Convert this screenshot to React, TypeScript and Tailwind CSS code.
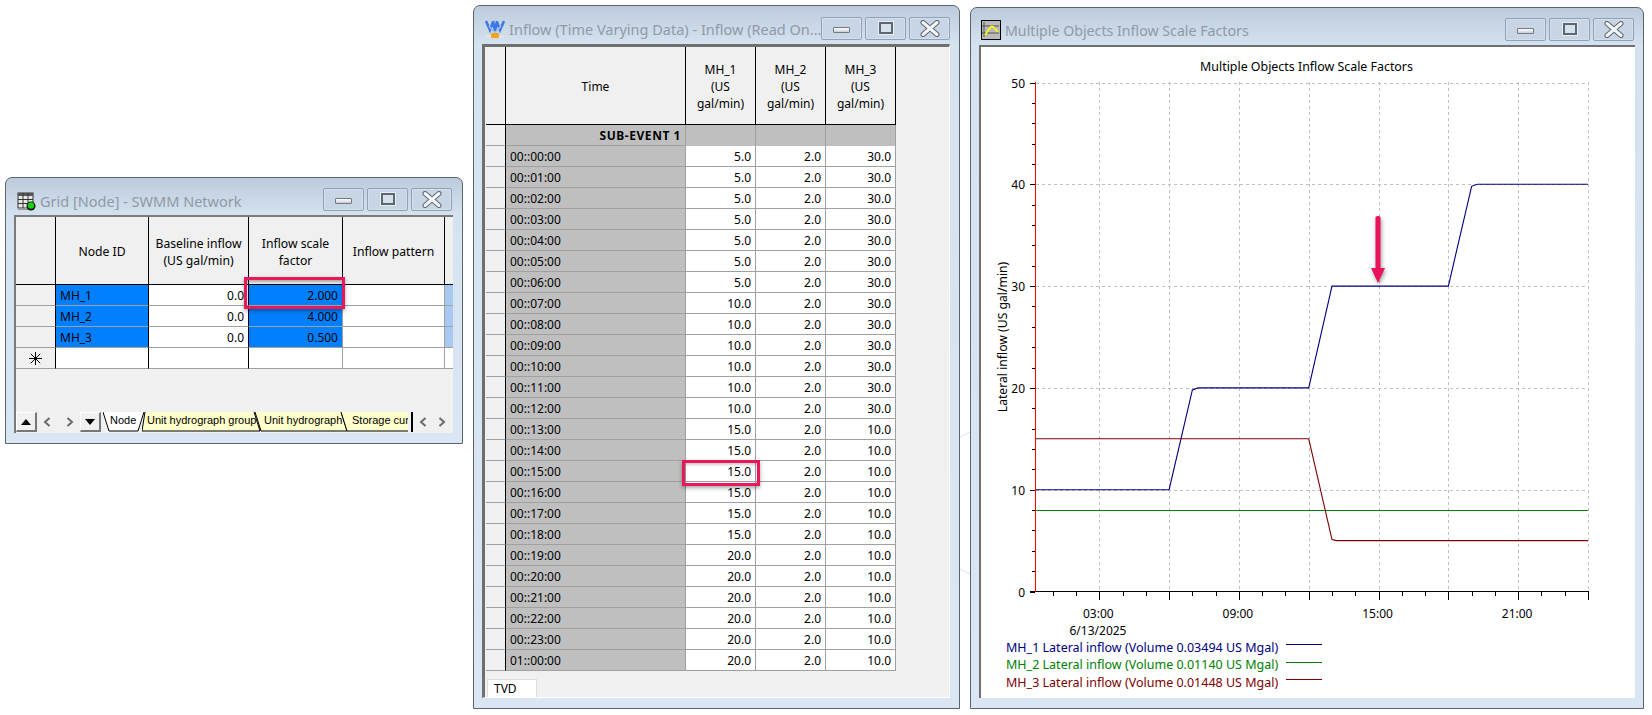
import React from "react";

const MinBtn = () => (
  <div className="w-[41px] h-[23px] rounded-[2px] border border-[#8fa2b9] bg-[#c7d5e4] shadow-[inset_0_0_0_1px_rgba(255,255,255,0.25)] flex items-center justify-center">
    <div className="w-[17px] h-[6px] mt-[3px] rounded-[1px] border border-[#6f7a87] bg-linear-to-b from-white to-[#c9ced4]" />
  </div>
);
const MaxBtn = () => (
  <div className="w-[41px] h-[23px] rounded-[2px] border border-[#8fa2b9] bg-[#c7d5e4] shadow-[inset_0_0_0_1px_rgba(255,255,255,0.25)] flex items-center justify-center">
    <div className="w-[14px] h-[12px] -mt-[1px] border-2 border-[#5c6775] bg-[#d7e1ec] shadow-[0_0_0_1px_rgba(255,255,255,0.6)]" />
  </div>
);
const CloseBtn = () => (
  <div className="w-[41px] h-[23px] rounded-[2px] border border-[#8fa2b9] bg-[#c7d5e4] shadow-[inset_0_0_0_1px_rgba(255,255,255,0.25)] flex items-center justify-center">
    <svg width="20" height="17" viewBox="0 0 20 17">
      <path d="M3 2.5 L17 14.5 M17 2.5 L3 14.5" stroke="#5e6873" strokeWidth="5" strokeLinecap="round" />
      <path d="M3 2.5 L17 14.5 M17 2.5 L3 14.5" stroke="#f4f6f8" strokeWidth="3" strokeLinecap="round" />
    </svg>
  </div>
);
const WinButtons = () => (
  <div className="ml-auto flex gap-[3px] shrink-0">
    <MinBtn />
    <MaxBtn />
    <CloseBtn />
  </div>
);

const GridIcon = () => (
  <svg width="19" height="19" viewBox="0 0 19 19" className="shrink-0">
    <rect x="1" y="1" width="15" height="15" fill="#e8e8e8" stroke="#333" />
    <rect x="1" y="1" width="15" height="3" fill="#555" />
    <path d="M1 7.5H16M1 11.5H16M6 1V16M11 1V16" stroke="#333" />
    <rect x="1" y="16" width="11" height="2" fill="#999" />
    <circle cx="14" cy="14" r="4.5" fill="#111" />
    <circle cx="14" cy="13.5" r="3.2" fill="#12d312" />
  </svg>
);
const InflowIcon = () => (
  <svg width="20" height="20" viewBox="0 0 20 20" className="shrink-0">
    <path d="M1 2 L5 11 L8 3 M8 2 L10 12 L12 2 M12 3 L15 11 L19 2" fill="none" stroke="#3f78e6" strokeWidth="2.6" />
    <path d="M4 7 L10 14 L16 7" fill="none" stroke="#9fc0f5" strokeWidth="1.6" />
    <rect x="1" y="16" width="18" height="3" fill="#dfe3e8" />
    <rect x="6" y="14" width="8" height="5" rx="1" fill="#f2a51e" />
  </svg>
);
const ChartIcon = () => (
  <svg width="20" height="20" viewBox="0 0 20 20" className="shrink-0">
    <rect x="0.5" y="0.5" width="19" height="19" fill="#b9b9b9" stroke="#000" />
    <path d="M3 2V17M1 6H18M1 13H18" stroke="#555" strokeWidth="1" />
    <path d="M4 15 L10 6.5 L12 6.5 L17 12" fill="none" stroke="#ffff00" strokeWidth="1.6" />
  </svg>
);

const frame =
  "absolute flex flex-col rounded-t-[7px] border border-[#5b646e] bg-[linear-gradient(#bccbdb_0,#d5e2f0_38px,#dae6f3_100%)]";

const Rowhead = ({ children }: { children?: React.ReactNode }) => (
  <div className="w-[40px] h-full shrink-0 bg-[#f0f0f0] border-r border-r-black border-b border-b-[#a0a0a0] flex items-center justify-center">
    {children}
  </div>
);

const HCell = ({ w, children }: { w: string; children: React.ReactNode }) => (
  <div className={`${w} h-full shrink-0 bg-[#f0f0f0] border-r border-black border-b pt-[2px] flex items-center justify-center text-center leading-[17px]`}>
    <div>{children}</div>
  </div>
);

type Row1 = { id: string; base: string; scale: string };
const nodeRows: Row1[] = [
  { id: "MH_1", base: "0.0", scale: "2.000" },
  { id: "MH_2", base: "0.0", scale: "4.000" },
  { id: "MH_3", base: "0.0", scale: "0.500" },
];

const Star = () => (
  <svg width="13" height="13" viewBox="0 0 13 13">
    <path d="M6.5 0V13M0 6.5H13M1.8 1.8L11.2 11.2M11.2 1.8L1.8 11.2" stroke="#000" strokeWidth="1" />
  </svg>
);

const Chevron = ({ dir }: { dir: "l" | "r" }) => (
  <svg width="8" height="10" viewBox="0 0 8 10">
    <path d={dir === "l" ? "M6.5 1 L2 5 L6.5 9" : "M1.5 1 L6 5 L1.5 9"} fill="none" stroke="#6b6b6b" strokeWidth="2" />
  </svg>
);
const RaisedBtn = ({ up }: { up: boolean }) => (
  <div className="w-[21px] h-[20px] shrink-0 bg-[#f0f0f0] border-t border-l border-t-white border-l-white border-b-2 border-r-2 border-b-[#777] border-r-[#777] flex items-center justify-center">
    <svg width="10" height="6" viewBox="0 0 10 6">
      <path d={up ? "M5 0 L10 6 H0 Z" : "M0 0 H10 L5 6 Z"} fill="#000" />
    </svg>
  </div>
);

const Tab = ({
  w,
  points,
  fill,
  className,
  textClass,
  children,
}: {
  w: number;
  points: string;
  fill: string;
  className: string;
  textClass: string;
  children: React.ReactNode;
}) => (
  <div className={`relative h-[20px] shrink-0 ${className}`}>
    <svg width={w} height="20" viewBox={`0 0 ${w} 20`} className="absolute inset-0">
      <polygon points={points} fill={fill} />
      <polyline points={points} fill="none" stroke="#000" strokeWidth="1" />
    </svg>
    <span className={`absolute top-[0px] leading-[17px] whitespace-nowrap text-[11px] font-['Liberation_Sans',sans-serif] ${textClass}`}>
      {children}
    </span>
  </div>
);

const GridWindow = () => (
  <div className={`${frame} left-[5px] top-[177px] w-[458px] h-[267px]`}>
    <div className="h-[37px] shrink-0 flex pl-[11px] pr-[10px] pt-[10px]">
      <div className="mt-[4px]">
        <GridIcon />
      </div>
      <div className="ml-[4px] mt-[2px] text-[14.5px] leading-[22px] text-[#8f9aa6] whitespace-nowrap">Grid [Node] - SWMM Network</div>
      <WinButtons />
    </div>
    <div className="ml-[8px] w-[439px] h-[218px] flex flex-col border-l-2 border-t-2 border-[#7a7a7a] bg-[#f0f0f0] text-[12px] text-black">
      <div className="h-[68px] flex shrink-0 text-[12.2px]">
        <div className="w-[40px] h-full shrink-0 bg-[#f0f0f0] border-r border-b border-black" />
        <HCell w="w-[93px]">Node ID</HCell>
        <HCell w="w-[100px]">
          Baseline inflow
          <br />
          (US gal/min)
        </HCell>
        <HCell w="w-[94px]">
          Inflow scale
          <br />
          factor
        </HCell>
        <HCell w="w-[102px]">Inflow pattern</HCell>
        <div className="flex-1 h-full bg-[#f0f0f0] border-b border-black" />
      </div>
      {nodeRows.map((r) => (
        <div key={r.id} className="h-[21px] flex shrink-0">
          <Rowhead />
          <div className="w-[93px] shrink-0 bg-[#0080ff] border-r border-r-black border-b border-b-[#a0a0a0] pl-[4px] pt-[2px] flex items-center">{r.id}</div>
          <div className="w-[100px] shrink-0 bg-white border-r border-r-black border-b border-b-[#a0a0a0] pr-[4px] pt-[2px] flex items-center justify-end">{r.base}</div>
          <div className="w-[94px] shrink-0 bg-[#0080ff] border-r border-r-[#a0a0a0] border-b border-b-[#a0a0a0] pr-[4px] pt-[2px] flex items-center justify-end">{r.scale}</div>
          <div className="w-[102px] shrink-0 bg-white border-r border-r-[#a0a0a0] border-b border-b-[#a0a0a0]" />
          <div className="flex-1 bg-[#a8c9f2] border-b border-b-[#a0a0a0]" />
        </div>
      ))}
      <div className="h-[21px] flex shrink-0">
        <Rowhead>
          <Star />
        </Rowhead>
        <div className="w-[93px] shrink-0 bg-white border-r border-r-black border-b border-b-[#a0a0a0]" />
        <div className="w-[100px] shrink-0 bg-white border-r border-r-black border-b border-b-[#a0a0a0]" />
        <div className="w-[94px] shrink-0 bg-white border-r border-r-[#a0a0a0] border-b border-b-[#a0a0a0]" />
        <div className="w-[102px] shrink-0 bg-white border-r border-r-[#a0a0a0] border-b border-b-[#a0a0a0]" />
        <div className="flex-1 bg-white border-b border-b-[#a0a0a0]" />
      </div>
      <div className="mt-auto mb-[1px] h-[20px] flex items-stretch shrink-0 border-t-0">
        <RaisedBtn up />
        <div className="w-[43px] shrink-0 flex items-center justify-between px-[6px]">
          <Chevron dir="l" />
          <Chevron dir="r" />
        </div>
        <RaisedBtn up={false} />
        <div className="w-[305px] shrink-0 ml-[2px] flex overflow-hidden">
          <Tab w={42} points="0,0 6,19 35,19 41,0" fill="#ffffff" className="w-[42px]" textClass="left-[7px]">
            Node
          </Tab>
          <Tab w={119} points="3,0 0,19 118,19 112,0" fill="#ffffcc" className="w-[119px] -ml-[3px]" textClass="left-[5px]">
            Unit hydrograph group
          </Tab>
          <Tab w={93} points="0,0 6,19 92,19 86,0" fill="#ffffcc" className="w-[93px] -ml-[6px]" textClass="left-[9px]">
            Unit hydrograph
          </Tab>
          <Tab w={90} points="0,0 6,19 90,19 90,0" fill="#ffffcc" className="w-[90px] -ml-[7px]" textClass="left-[11px]">
            Storage cur
          </Tab>
        </div>
        <div className="w-[2px] shrink-0 ml-[3px] bg-black" />
        <div className="flex-1 flex items-center justify-between pl-[6px] pr-[7px]">
          <Chevron dir="l" />
          <Chevron dir="r" />
        </div>
      </div>
    </div>
  </div>
);

const tvd = Array.from({ length: 25 }, (_, i) => {
  const label = i === 24 ? "01::00:00" : `00::${String(i).padStart(2, "0")}:00`;
  const a = i <= 6 ? "5.0" : i <= 12 ? "10.0" : i <= 18 ? "15.0" : "20.0";
  const c = i <= 12 ? "30.0" : "10.0";
  return { label, a, b: "2.0", c };
});

const NumCell = ({ v }: { v: string }) => (
  <div className="w-[70px] shrink-0 bg-white border-r border-b border-[#a0a0a0] pr-[4px] pt-[2px] flex items-center justify-end">{v}</div>
);

const InflowWindow = () => (
  <div className={`${frame} left-[473px] top-[5px] w-[487px] h-[704px]`}>
    <div className="h-[38px] shrink-0 flex pl-[11px] pr-[9px] pt-[11px]">
      <div className="mt-[2px]">
        <InflowIcon />
      </div>
      <div className="ml-[4px] mt-[1px] text-[14.5px] leading-[22px] text-[#8f9aa6] whitespace-nowrap">Inflow (Time Varying Data) - Inflow (Read On...</div>
      <WinButtons />
    </div>
    <div className="ml-[8px] w-[468px] h-[654px] flex flex-col border-l-[3px] border-t-[3px] border-[#6f6f6f] bg-[#f0f0f0] pl-[1px] text-[12px] text-black border-r border-r-white border-b border-b-white">
      <div className="h-[78px] flex shrink-0">
        <div className="w-[20px] h-full shrink-0 bg-[#f0f0f0] border-r border-b border-black" />
        <HCell w="w-[180px]">Time</HCell>
        {["MH_1", "MH_2", "MH_3"].map((n) => (
          <HCell key={n} w="w-[70px]">
            {n}
            <br />
            (US
            <br />
            gal/min)
          </HCell>
        ))}
      </div>
      <div className="h-[21px] flex shrink-0">
        <div className="w-[20px] shrink-0 bg-[#f0f0f0] border-r border-r-black border-b border-b-[#a0a0a0]" />
        <div className="w-[180px] shrink-0 bg-[#bfbfbf] border-r border-b border-[#a0a0a0] pr-[4px] pt-[2px] flex items-center justify-end font-bold tracking-[0.55px]">SUB-EVENT 1</div>
        <div className="w-[70px] shrink-0 bg-[#bfbfbf] border-r border-r-[#a0a0a0]" />
        <div className="w-[70px] shrink-0 bg-[#bfbfbf] border-r border-r-[#a0a0a0]" />
        <div className="w-[70px] shrink-0 bg-[#bfbfbf] border-r border-r-[#a0a0a0]" />
      </div>
      {tvd.map((r) => (
        <div key={r.label} className="h-[21px] flex shrink-0">
          <div className="w-[20px] shrink-0 bg-[#f0f0f0] border-r border-r-black border-b border-b-[#a0a0a0]" />
          <div className="w-[180px] shrink-0 bg-[#bfbfbf] border-r border-b border-[#a0a0a0] pl-[4px] pt-[2px] flex items-center">{r.label}</div>
          <NumCell v={r.a} />
          <NumCell v={r.b} />
          <NumCell v={r.c} />
        </div>
      ))}
      <div className="mt-auto h-[18px] w-[50px] ml-[1px] bg-white border-t border-l border-r border-[#dcdcdc] pl-[6px] flex items-center shrink-0">TVD</div>
    </div>
  </div>
);

const yOf = (v: number) => 591.5 - v * 10.18;
const xOf = (h: number) => 1099.3 + (h - 3) * 23.27;
const hours = Array.from({ length: 24 }, (_, i) => i + 1);
const yMinor = Array.from({ length: 26 }, (_, i) => i * 2);
const legend = [
  { t: "MH_1 Lateral inflow (Volume 0.03494 US Mgal)", c: "#000080", y: 644.5 },
  { t: "MH_2 Lateral inflow (Volume 0.01140 US Mgal)", c: "#008000", y: 662 },
  { t: "MH_3 Lateral inflow (Volume 0.01448 US Mgal)", c: "#800000", y: 679.5 },
];

const Chart = () => (
  <svg width="654" height="651" viewBox="981 47 654 651" className="block" fontFamily="'Noto Sans', sans-serif" fontSize="12">
    <text x="1306.5" y="70.5" textAnchor="middle" fill="#000" fontSize="12.4">Multiple Objects Inflow Scale Factors</text>
    <g stroke="#c0c0c0" strokeDasharray="3 3" shapeRendering="crispEdges">
      {[50, 40, 30, 20, 10].map((v) => (
        <line key={v} x1="1036" x2="1588" y1={Math.round(yOf(v)) + 0.5} y2={Math.round(yOf(v)) + 0.5} />
      ))}
      {[3, 6, 9, 12, 15, 18, 21, 24].map((h) => (
        <line key={h} x1={Math.round(xOf(h)) + 0.5} x2={Math.round(xOf(h)) + 0.5} y1="82" y2="591" />
      ))}
    </g>
    <g stroke="#000" shapeRendering="crispEdges">
      <line x1="1030" x2="1588" y1="591.5" y2="591.5" />
      {hours.map((h) => (
        <line key={h} x1={Math.round(xOf(h)) + 0.5} x2={Math.round(xOf(h)) + 0.5} y1="591" y2={h % 3 === 0 ? 600 : 596} />
      ))}
      {yMinor.map((v) => (
        <line key={v} x1={v % 10 === 0 ? 1030 : 1032} x2="1035" y1={Math.round(yOf(v)) + 0.5} y2={Math.round(yOf(v)) + 0.5} />
      ))}
    </g>
    <line x1="1035.5" x2="1035.5" y1="82" y2="592" stroke="#ff0000" shapeRendering="crispEdges" />
    {[50, 40, 30, 20, 10, 0].map((v) => (
      <text key={v} x="1025" y={yOf(v) + 5} textAnchor="end" fill="#000">{v}</text>
    ))}
    <text transform="translate(1007 337) rotate(-90)" textAnchor="middle" fill="#000" fontSize="12.2">Lateral inflow (US gal/min)</text>
    <polyline fill="none" stroke="#008000" strokeWidth="1.1" points={`1036,${yOf(8) + 0.5} 1588,${yOf(8) + 0.5}`} />
    <polyline
      fill="none"
      stroke="#000080"
      strokeWidth="1.1"
      points={`1036,${yOf(10)} ${xOf(6)},${yOf(10)} ${xOf(7)},${yOf(19.8)} ${xOf(7.25)},${yOf(20)} ${xOf(12)},${yOf(20)} ${xOf(13)},${yOf(30)} ${xOf(18)},${yOf(30)} ${xOf(19)},${yOf(39.8)} ${xOf(19.25)},${yOf(40)} 1588,${yOf(40)}`}
    />
    <polyline
      fill="none"
      stroke="#800000"
      strokeWidth="1.1"
      points={`1036,${yOf(15)} ${xOf(12)},${yOf(15)} ${xOf(13)},${yOf(5.1)} ${xOf(13.2)},${yOf(5)} 1588,${yOf(5)}`}
    />
    {[["03:00", 3], ["09:00", 9], ["15:00", 15], ["21:00", 21]].map(([t, h]) => (
      <text key={t as string} x={xOf(h as number) - 1} y="618" textAnchor="middle" fill="#000">{t}</text>
    ))}
    <text x="1098" y="635" textAnchor="middle" fill="#000">6/13/2025</text>
    {legend.map((l) => (
      <g key={l.t}>
        <text x="1006" y={l.y + 7} fill={l.c} fontSize="12.5">{l.t}</text>
        <line x1="1286" x2="1322" y1={l.y} y2={l.y} stroke={l.c} shapeRendering="crispEdges" />
      </g>
    ))}
    <g style={{ filter: "drop-shadow(1px 2px 2px rgba(0,0,0,0.4))" }}>
      <path d="M1375.5 217 Q1378 215 1380.5 217 V268 H1385 L1378 283 L1371 268 H1375.5 Z" fill="#e8135a" />
    </g>
  </svg>
);

const ChartWindow = () => (
  <div className={`${frame} left-[970px] top-[7px] w-[674px] h-[702px]`}>
    <div className="h-[37px] shrink-0 flex pl-[10px] pr-[9px] pt-[10px]">
      <div className="mt-[2px]">
        <ChartIcon />
      </div>
      <div className="ml-[4px] mt-[2px] text-[14.2px] leading-[22px] text-[#8f9aa6] whitespace-nowrap">Multiple Objects Inflow Scale Factors</div>
      <WinButtons />
    </div>
    <div className="ml-[8px] w-[656px] h-[653px] border-l-2 border-t-2 border-[#6f6f6f] bg-white">
      <Chart />
    </div>
  </div>
);

export default function App() {
  return (
    <div className="relative w-[1652px] h-[715px] bg-white overflow-hidden font-['Noto_Sans',sans-serif]">
      <svg width="12" height="150" viewBox="0 0 12 150" className="absolute left-[960px] top-[430px]">
        <path d="M0 7 L10 2 M0 139 L10 144" stroke="#e1e3ea" fill="none" />
      </svg>
      <GridWindow />
      <InflowWindow />
      <ChartWindow />
      <div className="absolute left-[244px] top-[277px] w-[101px] h-[32px] border-[3px] border-[#e8185b] shadow-[0_2px_4px_rgba(0,0,0,0.35),inset_0_2px_3px_rgba(0,0,0,0.3)]" />
      <div className="absolute left-[682px] top-[460px] w-[78px] h-[26px] border-[3px] border-[#e8185b] shadow-[0_2px_4px_rgba(0,0,0,0.35),inset_0_2px_3px_rgba(0,0,0,0.2)]" />
    </div>
  );
}
